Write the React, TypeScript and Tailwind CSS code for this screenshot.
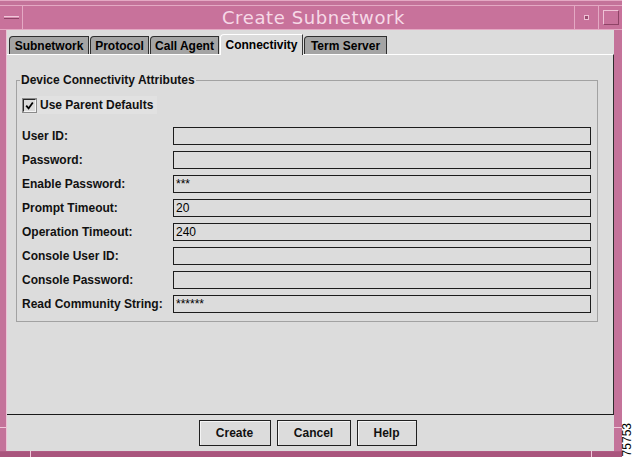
import React from 'react';

const font = { fontFamily: '"Liberation Sans", Arial, sans-serif' };

const tabs = [
  { label: 'Subnetwork', w: 'w-[80px]' },
  { label: 'Protocol', w: 'w-[59px]' },
  { label: 'Call Agent', w: 'w-[69px]' },
  { label: 'Connectivity', w: 'w-[83px]', active: true },
  { label: 'Term Server', w: 'w-[83px]' },
];

const rows = [
  { label: 'User ID:', value: '' },
  { label: 'Password:', value: '' },
  { label: 'Enable Password:', value: '***' },
  { label: 'Prompt Timeout:', value: '20' },
  { label: 'Operation Timeout:', value: '240' },
  { label: 'Console User ID:', value: '' },
  { label: 'Console Password:', value: '' },
  { label: 'Read Community String:', value: '******' },
];

const TitleBar: React.FC = () => (
  <div className="flex h-[25px] border-y border-[#e4a9c4] bg-[#c8729b]">
    {/* window menu button */}
    <div className="flex w-[23px] items-center justify-center border-r border-[#e4a9c4]">
      <div className="h-[3px] w-[15px] border-t border-[#f0c8da] border-b border-b-[#8e4366] bg-[#d88aaf]" />
    </div>
    <div className="flex flex-1 items-center justify-center pl-[30px]">
      <span
        className="text-[18px] leading-none tracking-[0.6px] text-[#f6d9e7]"
        style={{ fontFamily: '"DejaVu Sans", sans-serif' }}
      >
        Create Subnetwork
      </span>
    </div>
    <div className="flex w-[24px] items-center justify-center border-l border-[#e4a9c4]">
      <div className="h-[3px] w-[3px] bg-[#9c4d72] outline outline-1 outline-[#efc2d6]" />
    </div>
    <div className="flex w-[24px] items-center justify-center border-l border-[#e4a9c4]">
      <div className="h-[15px] w-[16px] border border-t-[#efc2d6] border-l-[#efc2d6] border-r-[#8e4366] border-b-[#8e4366]" />
    </div>
  </div>
);

const Tabs: React.FC = () => (
  <div className="relative z-10 flex h-[21px] items-end gap-px pl-[2px]">
    {tabs.map((t) =>
      t.active ? (
        <div
          key={t.label}
          className={`${t.w} -mb-px flex h-[21px] items-center justify-center rounded-tl-[4px] border-l border-t border-r border-l-white border-t-white border-r-[#3a3a3a] bg-[#dcdcdc] text-[12px] font-bold text-black`}
        >
          {t.label}
        </div>
      ) : (
        <div
          key={t.label}
          className={`${t.w} flex h-[18px] items-center justify-center rounded-tl-[4px] border border-b-0 border-[#2e2e2e] bg-[#a4a4a4] text-[12px] font-bold text-black`}
        >
          {t.label}
        </div>
      )
    )}
  </div>
);

const Checkbox: React.FC = () => (
  <div className="flex h-[13px] w-[13px] items-center justify-center border border-[#2a2a2a] border-r-[#f4f4f4] border-b-[#f4f4f4] bg-[#dcdcdc] outline outline-1 outline-[#8a8a8a]">
    <svg width="9" height="9" viewBox="0 0 9 9">
      <path d="M1.2 4.6 L3.6 7.4 L7.8 1.4" fill="none" stroke="#000" strokeWidth="1.8" />
    </svg>
  </div>
);

const Field: React.FC<{ label: string; value: string }> = ({ label, value }) => (
  <div className="flex h-[18px] items-center">
    <div className="w-[156px] pl-[5px] text-[12px] leading-[14px] font-bold text-[#111]">{label}</div>
    <div className="flex h-[18px] w-[418px] items-center border border-[#1c1c1c] bg-[#dcdcdc] px-[2px] text-[12px] leading-[14px] text-black">
      {value}
    </div>
  </div>
);

export default function App() {
  return (
    <div className="flex h-[457px] w-[633px] bg-white" style={font}>
      <div className="relative flex h-full w-[622px] flex-col border-t border-[#e4a9c4] bg-[#c4739a] pt-[4px]">
        <TitleBar />

        <div className="ml-[6px] mr-[8px] flex flex-1 flex-col border-l border-[#ecc3d5] bg-[#dcdcdc] pt-[3px]">
          <Tabs />

          {/* tab panel */}
          <div className="flex h-[361px] flex-col border-t border-r border-b border-t-white border-r-[#2c2c2c] border-b-[#1a1a1a] pt-[25px] pl-[9px] pr-[15px]">
            <div className="relative flex flex-col border border-[#a2a2a2] pb-[8px]">
              <span className="absolute -top-[8px] left-[3px] bg-[#dcdcdc] px-px text-[12px] leading-[14px] font-bold text-[#111]">
                Device Connectivity Attributes
              </span>

              <div className="mt-[15px] ml-[3px] flex h-[18px] w-[137px] items-center gap-[4px] bg-[#e1e1e1] px-[3px]">
                <Checkbox />
                <span className="text-[12px] leading-[14px] font-bold text-[#111]">Use Parent Defaults</span>
              </div>

              <div className="mt-[13px] flex flex-col gap-[6px]">
                {rows.map((r) => (
                  <Field key={r.label} label={r.label} value={r.value} />
                ))}
              </div>
            </div>
          </div>

          {/* buttons */}
          <div className="flex justify-center gap-[6px] pt-[5px] pr-[6px]">
            {['Create', 'Cancel', 'Help'].map((b, i) => (
              <button
                key={b}
                className={`${i === 0 ? 'w-[72px]' : i === 1 ? 'w-[74px]' : 'w-[60px]'} h-[26px] border border-[#202020] bg-[#dcdcdc] text-[12px] font-bold text-[#111] shadow-[inset_1px_1px_0_#f4f4f4]`}
              >
                {b}
              </button>
            ))}
          </div>
        </div>

        {/* bottom frame */}
        <div className="h-[6px] border-t border-[#b05c84] bg-[#a9557d]" />

        {/* resize handle ticks */}
        <span className="absolute left-0 top-[426px] h-px w-[6px] bg-[#f0c8da]" />
        <span className="absolute bottom-0 left-[30px] h-[6px] w-px bg-[#f0c8da]" />
        <span className="absolute right-0 top-[426px] h-px w-[8px] bg-[#f0c8da]" />
        <span className="absolute bottom-0 right-[30px] h-[6px] w-px bg-[#f0c8da]" />
      </div>

      <div className="flex flex-1 flex-col justify-end pb-[1px]">
        <span className="rotate-180 text-[12px] leading-[11px] text-black [writing-mode:vertical-rl]">
          75753
        </span>
      </div>
    </div>
  );
}
